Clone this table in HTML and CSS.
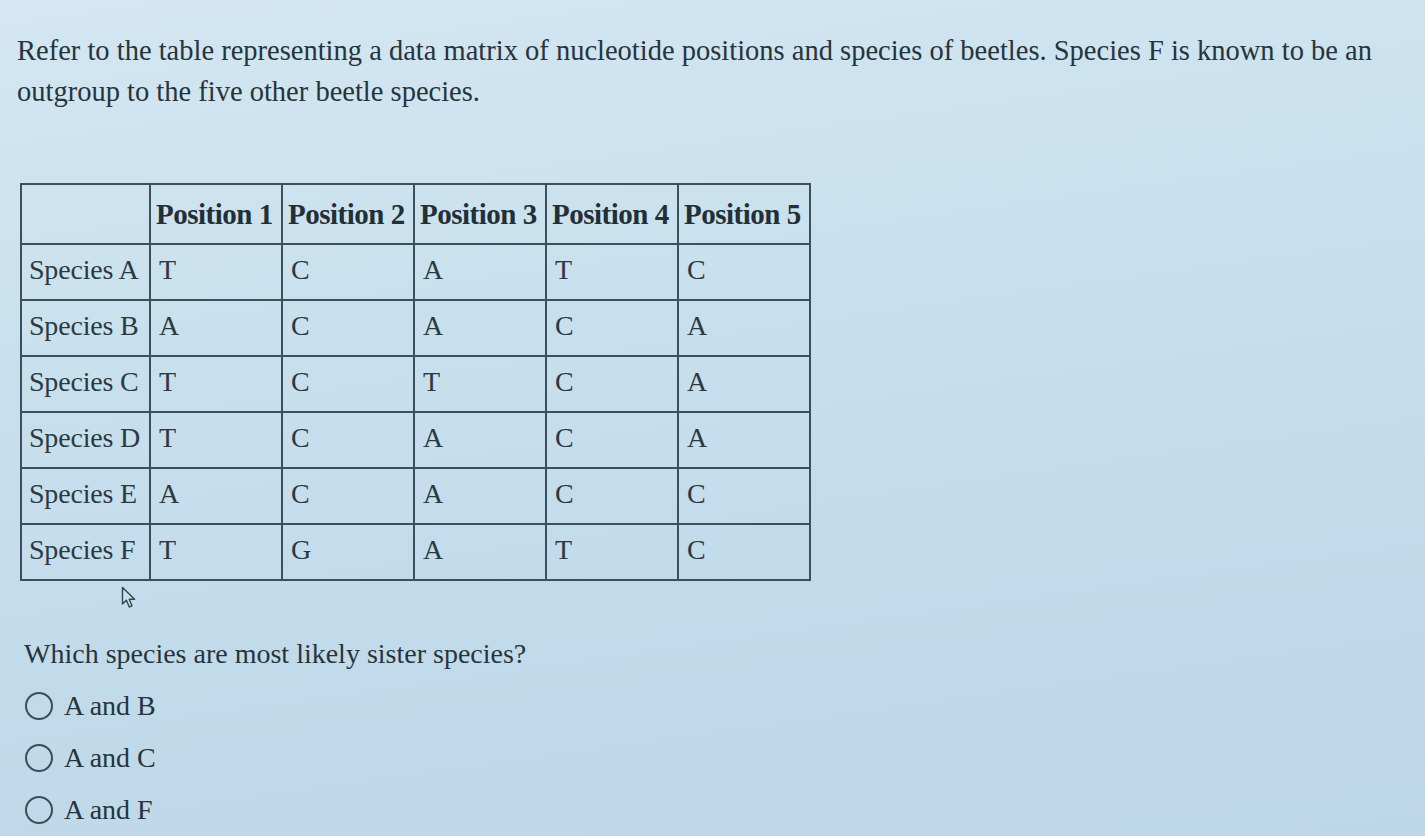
FILE: index.html
```html
<!DOCTYPE html>
<html lang="en">
<head>
<meta charset="utf-8">
<title>Beetle data matrix</title>
<link rel="stylesheet" href="styles.css">
</head>
<body>
<main class="page">
  <p class="intro">Refer to the table representing a data matrix of nucleotide positions and species of beetles. Species F is known to be an outgroup to the five other beetle species.</p>

  <div class="table-wrap">
    <table class="matrix">
      <colgroup>
        <col class="c-species">
        <col class="c-pos">
        <col class="c-pos">
        <col class="c-pos">
        <col class="c-pos">
        <col class="c-pos">
      </colgroup>
      <thead>
        <tr>
          <th class="corner"></th>
          <th>Position 1</th>
          <th>Position 2</th>
          <th>Position 3</th>
          <th>Position 4</th>
          <th>Position 5</th>
        </tr>
      </thead>
      <tbody>
        <tr><td>Species A</td><td>T</td><td>C</td><td>A</td><td>T</td><td>C</td></tr>
        <tr><td>Species B</td><td>A</td><td>C</td><td>A</td><td>C</td><td>A</td></tr>
        <tr><td>Species C</td><td>T</td><td>C</td><td>T</td><td>C</td><td>A</td></tr>
        <tr><td>Species D</td><td>T</td><td>C</td><td>A</td><td>C</td><td>A</td></tr>
        <tr><td>Species E</td><td>A</td><td>C</td><td>A</td><td>C</td><td>C</td></tr>
        <tr><td>Species F</td><td>T</td><td>G</td><td>A</td><td>T</td><td>C</td></tr>
      </tbody>
    </table>
    <svg class="cursor" width="17" height="24" viewBox="0 0 17 24" aria-hidden="true">
      <path d="M1.5 1.5 L1.5 18 L5.4 14.2 L8.3 21 L11 19.8 L8.2 13.3 L13.6 13.3 Z" fill="#c8dfec" stroke="#33474f" stroke-width="1.4" stroke-linejoin="round"/>
    </svg>
  </div>

  <section class="question">
    <p class="prompt">Which species are most likely sister species?</p>
    <ul class="options">
      <li class="option"><span class="radio"></span><span class="label">A and B</span></li>
      <li class="option"><span class="radio"></span><span class="label">A and C</span></li>
      <li class="option"><span class="radio"></span><span class="label">A and F</span></li>
    </ul>
  </section>
</main>
</body>
</html>
```
FILE: styles.css
```css
html, body {
  margin: 0;
  padding: 0;
}

body {
  width: 1425px;
  height: 836px;
  overflow: hidden;
  background: linear-gradient(172deg, #d4e7f2 0%, #cae1ee 30%, #c2dbeb 65%, #bcd7e8 100%);
  color: #27343c;
  font-family: "Liberation Serif", "Times New Roman", serif;
}

.page {
  padding: 30px 0 0 17px;
}

.intro {
  margin: 0;
  width: 1385px;
  font-size: 28.5px;
  line-height: 41px;
}

.table-wrap {
  position: relative;
  margin-top: 71px;
  margin-left: 3px;
  width: 790px;
}

.matrix {
  border-collapse: collapse;
  table-layout: fixed;
  width: 790px;
  font-size: 28px;
}

.c-species { width: 129px; }
.c-pos { width: 132px; }

.matrix th,
.matrix td {
  border: 2px solid #3a505c;
  text-align: left;
  vertical-align: middle;
  white-space: nowrap;
  overflow: hidden;
}

.matrix th {
  height: 58px;
  padding: 0 0 0 5px;
  font-size: 29px;
  font-weight: bold;
  letter-spacing: -0.5px;
  color: #232f37;
}

.matrix td {
  height: 50px;
  padding: 0 0 4px 8px;
  color: #2b3941;
}

.matrix td:first-child {
  padding-left: 7px;
  letter-spacing: -0.2px;
}

.cursor {
  position: absolute;
  left: 101px;
  top: 403px;
}

.question {
  margin-top: 55px;
  margin-left: 7px;
}

.prompt {
  margin: 0;
  font-size: 28px;
  line-height: 36px;
}

.options {
  list-style: none;
  margin: 8px 0 0 0;
  padding: 0;
  display: flex;
  flex-direction: column;
}

.option {
  display: flex;
  align-items: center;
  gap: 11px;
  height: 52px;
  font-size: 28px;
}

.radio {
  display: block;
  width: 28px;
  height: 28px;
  margin-left: 1px;
  border: 2px solid #3b4d57;
  border-radius: 50%;
  box-sizing: border-box;
}
```
